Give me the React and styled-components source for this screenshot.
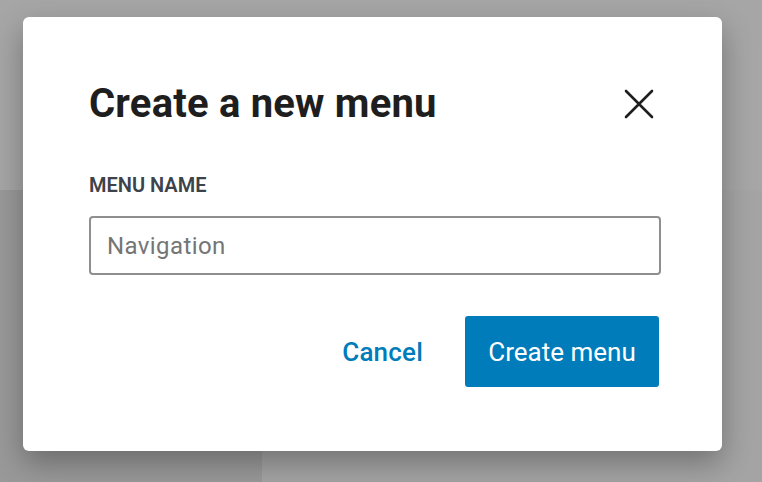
import React from 'react'
import styled, { createGlobalStyle } from 'styled-components'

const GlobalStyle = createGlobalStyle`
  html, body {
    margin: 0;
    padding: 0;
  }
  body {
    font-family: Roboto, "Liberation Sans", sans-serif;
    width: 762px;
    height: 482px;
    overflow: hidden;
  }
`

const Page = styled.div`
  position: relative;
  width: 762px;
  height: 482px;
  display: flex;
  flex-direction: column;
  background: #a5a5a5;
`

const TopArea = styled.div`
  height: 190px;
  background: #a6a6a6;
`

const Lower = styled.div`
  flex: 1;
  display: flex;
`

const Sidebar = styled.div`
  width: 262px;
  background: #999999;
`

const Content = styled.div`
  flex: 1;
  background: #a4a4a4;
`

const Modal = styled.div`
  position: absolute;
  left: 23px;
  top: 17px;
  width: 699px;
  box-sizing: border-box;
  padding: 65px 63px 64px 66px;
  background: #fff;
  border-radius: 6px;
  box-shadow: 0 12px 30px rgba(0, 0, 0, 0.3);
`

const Header = styled.div`
  display: flex;
  align-items: center;
  justify-content: space-between;
`

const Title = styled.h1`
  margin: 0;
  font-size: 40px;
  line-height: 44px;
  font-weight: 700;
  letter-spacing: 0.2px;
  color: #1e1e1e;
`

const CloseButton = styled.button`
  display: flex;
  align-items: center;
  justify-content: center;
  width: 40px;
  height: 40px;
  padding: 0;
  border: 0;
  background: none;
  cursor: pointer;
`

const Label = styled.label`
  display: block;
  margin-top: 47px;
  font-size: 20px;
  line-height: 24px;
  font-weight: 600;
  color: #3c434a;
  text-transform: uppercase;
`

const Input = styled.input`
  display: block;
  box-sizing: border-box;
  width: 572px;
  height: 59px;
  margin-top: 19px;
  padding: 0 16px;
  border: 2px solid #8f8f8f;
  border-radius: 4px;
  font-family: inherit;
  font-size: 24px;
  letter-spacing: 0.4px;
  color: #1e1e1e;
  outline: none;
  &::placeholder {
    color: #757575;
  }
`

const Actions = styled.div`
  display: flex;
  justify-content: flex-end;
  align-items: center;
  gap: 42px;
  margin-top: 41px;
`

const TextButton = styled.button`
  padding: 0;
  border: 0;
  background: none;
  font-family: inherit;
  font-size: 26px;
  font-weight: 500;
  letter-spacing: 0.2px;
  color: #007cba;
  cursor: pointer;
`

const PrimaryButton = styled.button`
  width: 194px;
  height: 71px;
  padding: 0;
  border: 0;
  border-radius: 3px;
  background: #007cba;
  font-family: inherit;
  font-size: 26px;
  font-weight: 400;
  color: #fff;
  cursor: pointer;
`

const CloseIcon = () => (
  <svg width="30" height="30" viewBox="0 0 30 30" fill="none">
    <path d="M2 2 L28 28 M28 2 L2 28" stroke="#1e1e1e" strokeWidth="2.6" strokeLinecap="round" />
  </svg>
)

const App = () => (
  <>
    <GlobalStyle />
    <Page>
      <TopArea />
      <Lower>
        <Sidebar />
        <Content />
      </Lower>
      <Modal>
        <Header>
          <Title>Create a new menu</Title>
          <CloseButton aria-label="Close">
            <CloseIcon />
          </CloseButton>
        </Header>
        <Label htmlFor="menu-name">Menu name</Label>
        <Input id="menu-name" placeholder="Navigation" />
        <Actions>
          <TextButton>Cancel</TextButton>
          <PrimaryButton>Create menu</PrimaryButton>
        </Actions>
      </Modal>
    </Page>
  </>
)

export default App
